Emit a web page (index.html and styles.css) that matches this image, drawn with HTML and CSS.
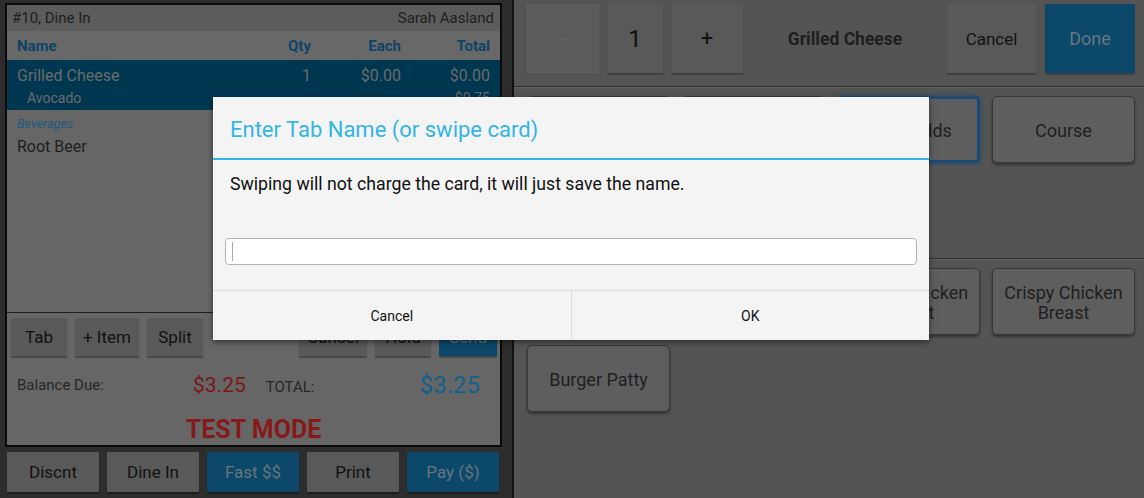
FILE: index.html
```html
<!DOCTYPE html>
<html lang="en">
<head>
    <meta charset="UTF-8">
    <meta name="viewport" content="width=device-width, initial-scale=1.0">
    <title>Order Entry</title>
    <link rel="stylesheet" href="styles.css">
</head>
<body>

    <div class="screen">
        <div class="order-side">
            <div class="ticket">
                <div class="ticket-head">
                    <span>#10, Dine In</span>
                    <span>Sarah Aasland</span>
                </div>
                <div class="cols col-head">
                    <span>Name</span>
                    <span class="num">Qty</span>
                    <span class="num">Each</span>
                    <span class="num">Total</span>
                </div>
                <div class="line-item selected">
                    <div class="cols">
                        <span>Grilled Cheese</span>
                        <span class="num">1</span>
                        <span class="num">$0.00</span>
                        <span class="num">$0.00</span>
                    </div>
                    <div class="cols mod">
                        <span>Avocado</span>
                        <span></span>
                        <span></span>
                        <span class="num">$0.75</span>
                    </div>
                </div>
                <div class="group-label">Beverages</div>
                <div class="line-item">
                    <div class="cols">
                        <span>Root Beer</span>
                    </div>
                </div>

                <div class="ticket-actions">
                    <button class="btn w56">Tab</button>
                    <button class="btn w64">+ Item</button>
                    <button class="btn w56">Split</button>
                    <span class="spacer"></span>
                    <button class="btn w68">Cancel</button>
                    <button class="btn w56">Hold</button>
                    <button class="btn btn-blue w58">Send</button>
                </div>

                <div class="totals">
                    <span class="bal-label">Balance Due:</span>
                    <span class="bal-value">$3.25</span>
                    <span class="total-label">TOTAL:</span>
                    <span class="total-value">$3.25</span>
                </div>
                <div class="test-mode">TEST MODE</div>
            </div>

            <div class="pay-row">
                <button class="btn">Discnt</button>
                <button class="btn">Dine In</button>
                <button class="btn btn-blue">Fast $$</button>
                <button class="btn">Print</button>
                <button class="btn btn-blue">Pay ($)</button>
            </div>
        </div>

        <div class="menu-side">
            <div class="edit-bar">
                <button class="btn qty-btn disabled">-</button>
                <button class="btn qty-num">1</button>
                <button class="btn qty-btn">+</button>
                <span class="edit-title">Grilled Cheese</span>
                <button class="btn edit-cancel">Cancel</button>
                <button class="btn btn-blue edit-done">Done</button>
            </div>

            <div class="categories">
                <button class="tile">Cheese</button>
                <button class="tile">Toppings</button>
                <button class="tile active">Meat Adds</button>
                <button class="tile">Course</button>
            </div>

            <div class="items">
                <button class="tile"></button>
                <button class="tile"></button>
                <button class="tile">Grilled Chicken Breast</button>
                <button class="tile">Crispy Chicken Breast</button>
                <button class="tile">Burger Patty</button>
            </div>
        </div>
    </div>

    <div class="dialog">
        <div class="dialog-title">Enter Tab Name (or swipe card)</div>
        <p class="dialog-msg">Swiping will not charge the card, it will just save the name.</p>
        <div class="dialog-input"><span class="caret"></span></div>
        <div class="dialog-buttons">
            <button>Cancel</button>
            <button>OK</button>
        </div>
    </div>

</body>
</html>
```

FILE: styles.css
```css
/* Base - colours below are the dimmed ones shown while the dialog is open */
body {
    margin: 0;
    width: 1144px;
    height: 498px;
    overflow: hidden;
    position: relative;
    font-family: Roboto, "Noto Sans", sans-serif;
    background-color: #2d2d2d;
    color: #1a1a1a;
}

button {
    font-family: inherit;
}

.screen {
    display: flex;
    height: 498px;
}

/* Buttons */
.btn {
    border: none;
    border-radius: 1px;
    background-color: #595959;
    color: #111;
    font-size: 17px;
    padding: 0;
    box-shadow: 0 2px 1px rgba(0, 0, 0, 0.3);
}

.btn-blue {
    background-color: #0b486a;
    color: #68757e;
}

.w56 { width: 56px; }
.w58 { width: 58px; }
.w64 { width: 64px; }
.w68 { width: 68px; }

/* Left side: ticket */
.order-side {
    width: 512px;
    padding: 3px 0 0 5px;
    box-sizing: border-box;
}

.ticket {
    width: 497px;
    height: 444px;
    box-sizing: border-box;
    border: 2px solid #0a0a0a;
    background-color: #666;
    display: flex;
    flex-direction: column;
}

.ticket-head {
    height: 26px;
    display: flex;
    align-items: center;
    justify-content: space-between;
    padding: 0 6px 0 5px;
    background-color: #5c5c5c;
    font-size: 15px;
    color: #1e1e1e;
}

.cols {
    display: grid;
    grid-template-columns: 1fr 60px 90px 89px;
    padding: 0 10px;
}

.cols .num {
    text-align: right;
}

.col-head {
    height: 29px;
    align-items: center;
    background-color: #686868;
    font-size: 15px;
    font-weight: 700;
    color: #0c4467;
}

.line-item {
    padding: 5px 0 2px;
    font-size: 16px;
    color: #1e1e1e;
}

.line-item .cols {
    line-height: 22px;
}

.selected {
    height: 50px;
    box-sizing: border-box;
    background-color: #003750;
    color: #6b6b6b;
}

.mod {
    font-size: 14px;
}

.mod span:first-child {
    padding-left: 10px;
}

.group-label {
    padding: 6px 10px 0;
    font-size: 12.5px;
    font-style: italic;
    color: #1b5a80;
}

/* Ticket actions */
.ticket-actions {
    margin-top: auto;
    border-top: 1px solid #1e1e1e;
    display: flex;
    gap: 8px;
    padding: 5px 3px 0 4px;
    height: 38px;
}

.ticket-actions .spacer {
    flex: 1;
    margin-left: -8px;
}

.ticket-actions .btn {
    height: 38px;
}

.totals {
    display: flex;
    align-items: center;
    height: 38px;
    margin-top: 10px;
    padding: 0 20px 0 10px;
    font-size: 15px;
    color: #262626;
}

.bal-label {
    width: 176px;
}

.bal-value {
    font-size: 21px;
    color: #7c1616;
}

.total-label {
    margin-left: 20px;
    padding-top: 4px;
    flex: 1;
}

.total-value {
    font-size: 24px;
    color: #135f8e;
}

.test-mode {
    margin-top: 11px;
    height: 30px;
    line-height: 30px;
    text-align: center;
    font-size: 25px;
    font-weight: 700;
    color: #861a1a;
}

.pay-row {
    display: flex;
    gap: 8px;
    margin: 5px 0 0 2px;
}

.pay-row .btn {
    width: 92px;
    height: 40px;
}

/* Right side: menu */
.menu-side {
    flex: 1;
    border-left: 2px solid #111;
    background-color: #545454;
    display: flex;
    flex-direction: column;
}

.edit-bar {
    height: 82px;
    flex-shrink: 0;
    display: flex;
    align-items: flex-start;
    gap: 8px;
    padding: 4px 9px 0 13px;
    border-bottom: 1px solid #323232;
    box-shadow: 0 1px 0 #5e5e5e;
}

.edit-bar .btn {
    height: 69px;
    box-shadow: 0 2px 1px rgba(0, 0, 0, 0.25);
}

.qty-btn {
    width: 72px;
    font-size: 22px;
}

.qty-btn.disabled {
    background-color: #5b5b5b;
    color: #666;
    box-shadow: inset 0 0 0 1px #606060;
}

.qty-num {
    width: 56px;
    font-size: 24px;
}

.edit-title {
    flex: 1;
    display: flex;
    align-items: center;
    justify-content: center;
    height: 69px;
    font-size: 17.5px;
    font-weight: 700;
    color: #1e1e1e;
}

.edit-cancel {
    width: 89px;
}

.edit-done {
    width: 90px;
    margin-left: 1px;
    font-size: 18px;
}

.categories,
.items {
    display: grid;
    grid-template-columns: repeat(4, 143px);
    column-gap: 12px;
    row-gap: 10px;
    grid-auto-rows: 67px;
    padding: 9px 0 0 13px;
}

.categories {
    height: 172px;
    flex-shrink: 0;
    box-sizing: border-box;
    border-bottom: 1px solid #323232;
    box-shadow: 0 1px 0 #5e5e5e;
}

.tile {
    border: 1px solid #383838;
    border-radius: 5px;
    background-color: #5e5e5e;
    color: #1e1e1e;
    font-size: 18px;
    line-height: 20px;
    padding: 3px 8px 0;
    box-shadow: 0 2px 3px rgba(0, 0, 0, 0.4);
}

.tile.active {
    border: 3px solid #1b4a72;
    box-shadow: 0 0 4px #1b4d78;
}

/* Dialog */
.dialog {
    position: absolute;
    left: 213px;
    top: 97px;
    width: 716px;
    height: 243px;
    background-color: #f4f4f4;
    box-shadow: 0 2px 6px rgba(0, 0, 0, 0.5);
    display: flex;
    flex-direction: column;
}

.dialog-title {
    height: 63px;
    flex-shrink: 0;
    display: flex;
    align-items: center;
    padding: 4px 17px 0;
    box-sizing: border-box;
    border-bottom: 2px solid #33b5e5;
    font-size: 22px;
    color: #33b5e5;
}

.dialog-msg {
    margin: 14px 17px 0;
    font-size: 17.7px;
    line-height: 20px;
    color: #111;
}

.dialog-input {
    margin: 44px 12px 0;
    height: 27px;
    box-sizing: border-box;
    border: 1px solid #b4b4b4;
    border-radius: 4px;
    background-color: #fff;
    position: relative;
}

.caret {
    position: absolute;
    left: 6px;
    top: 3px;
    bottom: 3px;
    width: 1px;
    background-color: #aaa;
}

.dialog-buttons {
    margin-top: auto;
    height: 49px;
    display: flex;
    border-top: 1px solid #dcdcdc;
}

.dialog-buttons button {
    flex: 1;
    border: none;
    background: none;
    font-size: 14px;
    color: #111;
}

.dialog-buttons button + button {
    border-left: 1px solid #dcdcdc;
}
```
